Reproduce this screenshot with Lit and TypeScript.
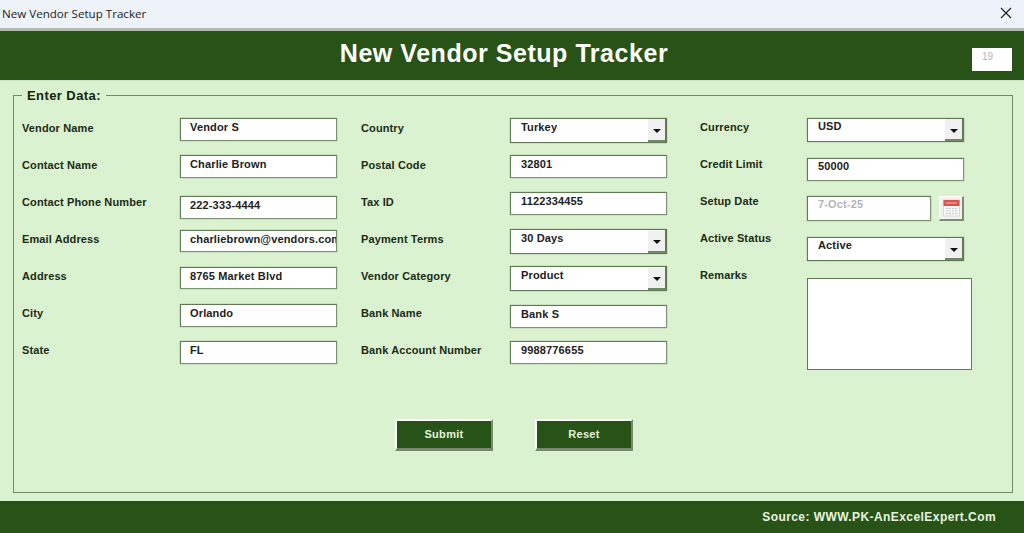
import { LitElement, html, css } from "lit";
import { customElement } from "lit/decorators.js";

const col1 = [
  ["Vendor Name", "Vendor S", ""],
  ["Contact Name", "Charlie Brown", ""],
  ["Contact Phone Number", "222-333-4444", "phone"],
  ["Email Address", "charliebrown@vendors.com", "email"],
  ["Address", "8765 Market Blvd", "email"],
  ["City", "Orlando", "bank"],
  ["State", "FL", "bank"],
];
const col2 = [
  ["Country", "Turkey", "select"],
  ["Postal Code", "32801", ""],
  ["Tax ID", "1122334455", ""],
  ["Payment Terms", "30 Days", "select"],
  ["Vendor Category", "Product", "select"],
  ["Bank Name", "Bank S", "bank2"],
  ["Bank Account Number", "9988776655", "bank"],
];

@customElement("app-root")
export class AppRoot extends LitElement {
  static styles = css`
    :host {
      display: flex;
      flex-direction: column;
      width: 1024px;
      height: 533px;
      overflow: hidden;
      font-family: "Liberation Sans", Arial, sans-serif;
      background: #daf2d0;
      color: #1a1a1a;
    }
    .titlebar {
      height: 28px;
      flex: none;
      box-sizing: border-box;
      display: flex;
      align-items: center;
      justify-content: space-between;
      padding: 0 12px 2px 2px;
      background: #eef2f9;
      font-family: "Open Sans", "Noto Sans", sans-serif;
      font-size: 11.6px;
      color: #222;
    }
    .close {
      display: block;
      width: 12px;
      height: 12px;
    }
    .rule {
      height: 3px;
      flex: none;
      background: #b4bab0;
    }
    .header {
      height: 49px;
      flex: none;
      display: grid;
      grid-template-columns: 1fr 40px;
      align-items: start;
      padding-right: 12px;
      background: #275317;
      border-bottom: 1px solid #cfe6c4;
      box-sizing: content-box;
    }
    .header h1 {
      margin: 7px 0 0;
      padding-left: 36px;
      text-align: center;
      font-size: 25px;
      line-height: 30px;
      font-weight: 700;
      letter-spacing: 0.54px;
      color: #fff;
    }
    .count {
      margin-top: 17px;
      height: 23px;
      box-sizing: border-box;
      padding: 3px 0 0 10px;
      background: #fff;
      color: #b5b5b5;
      font-size: 10px;
      line-height: 12px;
    }
    .body {
      flex: 1;
      min-height: 0;
      padding: 5px 11px 8px 13px;
      display: flex;
    }
    fieldset {
      flex: 1;
      margin: 0;
      padding: 0 0 0 8px;
      min-width: 0;
      border: 1px solid #6f8c63;
      display: block;
    }
    legend {
      margin-left: 0;
      padding: 2px 5px 0 5px;
      font-size: 13px;
      line-height: 16px;
      font-weight: 700;
      letter-spacing: 0.42px;
      color: #14240e;
    }
    .columns {
      display: flex;
      margin-top: 14px;
      height: 286px;
    }
    .group {
      display: flex;
    }
    .g1 { width: 339px; }
    .g2 { width: 339px; }
    .labels {
      display: flex;
      flex-direction: column;
      padding-top: 3px;
    }
    .g1 .labels { width: 158px; }
    .g2 .labels { width: 149px; }
    .g3 .labels { width: 107px; margin-top: -1px; }
    .label {
      height: 37px;
      font-size: 11px;
      line-height: 15px;
      font-weight: 700;
      letter-spacing: 0.12px;
      color: #1c2b16;
      white-space: nowrap;
    }
    .fields {
      display: flex;
      flex-direction: column;
      align-items: flex-start;
    }
    .slot {
      height: 37px;
    }
    .slot.phone {
      padding-top: 4px;
      height: 33px;
    }
    .slot.email,
    .slot.bank {
      padding-top: 1px;
      height: 36px;
    }
    .slot.bank2 {
      padding-top: 2px;
      height: 35px;
    }
    .field {
      box-sizing: border-box;
      position: relative;
      width: 157px;
      height: 23px;
      padding: 1px 0 0 9px;
      background: #fff;
      border: 1px solid #5f7a55;
      border-bottom-color: #7d9472;
      border-right-color: #7d9472;
      box-shadow: 0 0 1px #6b8760;
      font-size: 11px;
      line-height: 14px;
      font-weight: 700;
      letter-spacing: 0.15px;
      color: #222;
      white-space: nowrap;
      overflow: hidden;
    }
    .g2 .field,
    .g3 .field { padding-left: 10px; }
    .slot.email .field { height: 22px; }
    .field.select {
      height: 25px;
      border-color: #5f7a55;
      padding-right: 20px;
    }
    .arrowbtn {
      position: absolute;
      top: 0;
      right: 0;
      bottom: 0;
      width: 18px;
      background: #f0f0f0;
      border-right: 1px solid #5f7a55;
      border-bottom: 2px solid #72866a;
      box-sizing: border-box;
      display: flex;
      align-items: center;
      justify-content: center;
    }
    .arrowbtn i {
      display: block;
      width: 0;
      height: 0;
      border-left: 4px solid transparent;
      border-right: 4px solid transparent;
      border-top: 4px solid #111;
      margin-top: 3px;
    }
    .g3 .fields { gap: 16px; }
    .g3 .field.select { height: 24px; padding-top: 0; }
    .g3 .credit { height: 23px; padding-top: 0; }
    .date-row {
      display: flex;
      gap: 8px;
      margin-top: -1px;
    }
    .field.date {
      width: 124px;
      height: 25px;
      padding-top: 0;
      color: #b4b4b4;
    }
    .calbtn {
      box-sizing: border-box;
      width: 25px;
      height: 25px;
      display: flex;
      align-items: center;
      justify-content: center;
      background: #f2f2f0;
      border-right: 2px solid #7b8f72;
      border-bottom: 2px solid #7b8f72;
      border-top: 1px solid #fff;
      border-left: 1px solid #fff;
    }
    .calbtn svg { display: block; width: 17px; height: 18px; }
    .remarks {
      box-sizing: border-box;
      width: 165px;
      height: 92px;
      background: #fff;
      border: 1px solid #5f7a55;
      margin-top: 1px;
    }
    .actions {
      display: flex;
      gap: 42px;
      padding-left: 373px;
      margin-top: 15px;
    }
    button {
      box-sizing: border-box;
      width: 98px;
      height: 32px;
      padding: 0 0 2px;
      background: #275317;
      color: #e4f3dc;
      font: 700 11px/14px "Liberation Sans", Arial, sans-serif;
      letter-spacing: 0.3px;
      border-style: solid;
      border-width: 2px 2px 3px 2px;
      border-color: #fff #76896d #76896d #fff;
    }
    .footer {
      height: 32px;
      flex: none;
      box-sizing: border-box;
      display: flex;
      align-items: center;
      justify-content: flex-end;
      padding: 0 28px 0 0;
      background: #275317;
      color: #e8f3e2;
      font-size: 12px;
      font-weight: 700;
      letter-spacing: 0.43px;
    }
  `;

  private field(value: string, kind: string) {
    const isSelect = kind === "select";
    return html`<div class="slot ${kind}">
      <div class="field ${isSelect ? "select" : ""}">
        ${value}${isSelect ? this.arrow() : ""}
      </div>
    </div>`;
  }

  private arrow() {
    return html`<span class="arrowbtn"><i></i></span>`;
  }

  private group(cls: string, rows: string[][]) {
    return html`<div class="group ${cls}">
      <div class="labels">
        ${rows.map((r) => html`<div class="label">${r[0]}</div>`)}
      </div>
      <div class="fields">${rows.map((r) => this.field(r[1], r[2]))}</div>
    </div>`;
  }

  render() {
    return html`
      <div class="titlebar">
        <span>New Vendor Setup Tracker</span>
        <svg class="close" viewBox="0 0 12 12" fill="none" stroke="#222" stroke-width="1.2">
          <path d="M1 1 L11 11 M11 1 L1 11" />
        </svg>
      </div>
      <div class="rule"></div>
      <header class="header">
        <h1>New Vendor Setup Tracker</h1>
        <div class="count">19</div>
      </header>
      <main class="body">
        <fieldset>
          <legend>Enter Data:</legend>
          <div class="columns">
            ${this.group("g1", col1)} ${this.group("g2", col2)}
            <div class="group g3">
              <div class="labels">
                ${["Currency", "Credit Limit", "Setup Date", "Active Status", "Remarks"].map(
                  (l) => html`<div class="label">${l}</div>`
                )}
              </div>
              <div class="fields">
                <div class="field select">USD${this.arrow()}</div>
                <div class="field credit">50000</div>
                <div class="date-row">
                  <div class="field date">7-Oct-25</div>
                  <div class="calbtn">
                    <svg viewBox="0 0 17 18">
                      <rect x="0.5" y="1" width="16" height="16" fill="#f7f7f7" stroke="#d8d8d8" />
                      <rect x="0.5" y="1" width="16" height="6" fill="#d9534f" />
                      <path d="M3 4 H14" stroke="#f3b5b2" stroke-width="1" />
                      <path d="M3 9.5 H14 M3 12 H14 M3 14.5 H14" stroke="#c9c9c9" stroke-width="1" stroke-dasharray="2 1" />
                    </svg>
                  </div>
                </div>
                <div class="field select">Active${this.arrow()}</div>
                <div class="remarks"></div>
              </div>
            </div>
          </div>
          <div class="actions">
            <button>Submit</button>
            <button>Reset</button>
          </div>
        </fieldset>
      </main>
      <footer class="footer">Source: WWW.PK-AnExcelExpert.Com</footer>
    `;
  }
}
